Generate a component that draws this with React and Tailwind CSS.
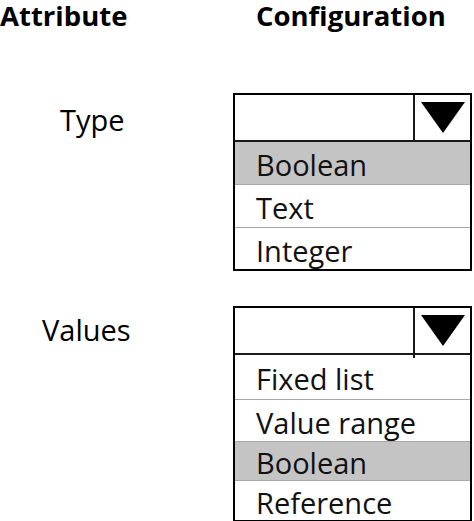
import React from "react";

// Attribute / configuration sheet with two dropdown pickers

const typeOptions = ["Boolean", "Text", "Integer"];
const valueOptions = ["Fixed list", "Value range", "Boolean", "Reference"];

function Dropdown({ options, selected, rowHeights, tail }) {
  return (
    <div className="w-[239px] border-2 border-black bg-white">
      <div className="relative flex h-[47px] border-b-2 border-[#1a1a1a]">
        <div className="flex-1" />
        <div className="w-[57px] border-l-2 border-[#1a1a1a] flex items-center justify-center">
          <svg width="44" height="31" viewBox="0 0 44 31">
            <polygon points="0,0 44,0 22,31" fill="#000" />
          </svg>
        </div>
        {tail && (
          <span className="absolute right-[55px] top-full w-[2px] h-[5px] bg-[#1a1a1a]" />
        )}
      </div>
      {options.map((opt, i) => (
        <div
          key={opt + i}
          style={{ height: rowHeights[i] }}
          className={`flex items-center pl-[21px] text-[29px] leading-none text-[#111] ${
            i > 0 ? "border-t border-[#a8a8a8]" : ""
          } ${opt === selected ? "bg-[#c4c4c4]" : ""}`}
        >
          <span className="pt-[3px]">{opt}</span>
        </div>
      ))}
    </div>
  );
}

export default function App() {
  return (
    <div className="w-[474px] h-[521px] overflow-hidden bg-white text-black font-['Open_Sans','Noto_Sans',sans-serif]">
      <div className="flex h-[34px] pt-[1px] items-start text-[27.5px] font-bold leading-[30px]">
        <div className="w-[256px]">Attribute</div>
        <div>Configuration</div>
      </div>

      <div className="mt-[59px] flex">
        <div className="w-[233px] pl-[60px] pt-[9px] text-[29px] leading-[36px]">
          Type
        </div>
        <Dropdown options={typeOptions} selected="Boolean" rowHeights={[42, 43, 42]} />
      </div>

      <div className="mt-[35px] flex">
        <div className="w-[233px] pl-[42px] pt-[6px] text-[29px] leading-[36px]">
          Values
        </div>
        <Dropdown
          options={valueOptions}
          selected="Boolean"
          rowHeights={[44, 42, 39, 40]}
          tail
        />
      </div>
    </div>
  );
}
